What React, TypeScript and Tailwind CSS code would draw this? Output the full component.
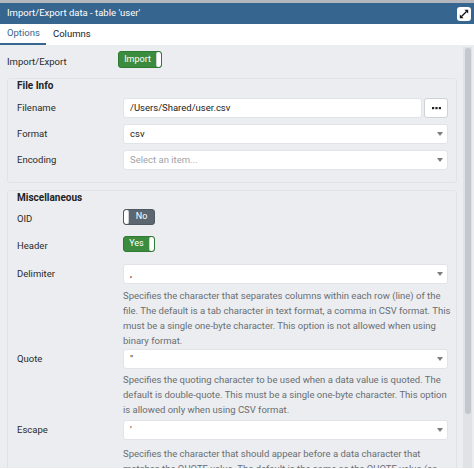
import React from "react";

const font = { fontFamily: "Roboto, 'Noto Sans', sans-serif" };

function Caret() {
  return (
    <svg width="6" height="4" viewBox="0 0 6 4" className="shrink-0">
      <polygon points="0,0 6,0 3,4" fill="#7a7d82" />
    </svg>
  );
}

function SelectBox({ value, placeholder }: { value?: string; placeholder?: string }) {
  return (
    <div className="flex-1 h-[20px] bg-white border border-[#e1e3e8] rounded-[3px] flex items-center justify-between pl-[6px] pr-[4px]">
      {value !== undefined ? (
        <span className="text-[#222]">{value}</span>
      ) : (
        <span className="text-[#a0a3a8]">{placeholder}</span>
      )}
      <Caret />
    </div>
  );
}

function Toggle({
  on,
  label,
  width,
  height,
}: {
  on: boolean;
  label: string;
  width: string;
  height: string;
}) {
  return (
    <div
      className={`${width} ${height} rounded-[3px] flex overflow-hidden border ${
        on ? "border-[#2f7a33] bg-[#3c8c3f]" : "border-[#4f5962] bg-[#5c6670]"
      }`}
    >
      {!on && <div className="w-[5px] bg-white rounded-[2px] border-r border-[#cfd3d8]" />}
      <div className="flex-1 flex items-center justify-center text-white text-[9px]">{label}</div>
      {on && <div className="w-[5px] bg-white rounded-[2px] border-l border-[#cfd3d8]" />}
    </div>
  );
}

function Help({ lines, className }: { lines: string[]; className: string }) {
  return (
    <div className={`pl-[106px] text-[#6a6d72] leading-[15px] whitespace-nowrap ${className}`}>
      {lines.map((l, i) => (
        <div key={i}>{l}</div>
      ))}
    </div>
  );
}

export default function App() {
  return (
    <div
      className="w-[474px] h-[469px] overflow-hidden flex flex-col bg-[#ebedf0] text-[9.5px] text-[#2a2a2a]"
      style={font}
    >
      <div className="h-[3px] bg-[#b4b8be]" />
      <div className="h-[21px] bg-[#36668f] flex items-center justify-between pl-[7px] pr-[3px]">
        <span className="text-white text-[9.5px]">Import/Export data - table 'user'</span>
        <div className="w-[14px] h-[14px] bg-white rounded-[3px] flex items-center justify-center">
          <svg width="10" height="10" viewBox="0 0 12 12">
            <line x1="3" y1="9" x2="9" y2="3" stroke="#111" strokeWidth="1.4" />
            <polygon points="1,11 1,6.5 5.5,11" fill="#111" />
            <polygon points="11,1 6.5,1 11,5.5" fill="#111" />
          </svg>
        </div>
      </div>
      <div className="h-[21px] bg-white flex items-stretch">
        <div className="w-[46px] pl-[7px] flex items-center border-b-2 border-[#36668f] text-[#36668f] text-[9.5px]">
          Options
        </div>
        <div className="pl-[7px] flex items-center text-[#222] text-[9.5px]">Columns</div>
      </div>
      <div className="flex-1 flex overflow-hidden">
        <div className="w-[457px] pl-[7px] overflow-hidden">
          <div className="flex items-start pt-[6px]">
            <div className="w-[111px] pt-[4px] leading-[14px]">Import/Export</div>
            <Toggle on={true} label="Import" width="w-[44px]" height="h-[17px]" />
          </div>

          <div className="mt-[9px] border border-[#dfe2e7] rounded-[3px] pl-[9px] pr-[8px] pb-[12px]">
            <div className="h-[13px] leading-[13px] font-bold text-[#222] text-[10px]">File Info</div>
            <div className="mt-[6px] flex flex-col gap-[6px]">
              <div className="flex items-center h-[20px]">
                <div className="w-[106px]">Filename</div>
                <div className="flex-1 flex gap-[2px] h-[20px]">
                  <div className="flex-1 bg-white border border-[#e1e3e8] rounded-[3px] flex items-center pl-[6px] text-[#222]">
                    /Users/Shared/user.csv
                  </div>
                  <div className="w-[24px] bg-white border border-[#cfd2d7] rounded-[3px] flex items-center justify-center">
                    <svg width="9" height="3" viewBox="0 0 9 3">
                      <rect x="0" y="0" width="2.2" height="2.2" fill="#222" />
                      <rect x="3.4" y="0" width="2.2" height="2.2" fill="#222" />
                      <rect x="6.8" y="0" width="2.2" height="2.2" fill="#222" />
                    </svg>
                  </div>
                </div>
              </div>
              <div className="flex items-center h-[20px]">
                <div className="w-[106px]">Format</div>
                <SelectBox value="csv" />
              </div>
              <div className="flex items-center h-[20px]">
                <div className="w-[106px]">Encoding</div>
                <SelectBox placeholder="Select an item..." />
              </div>
            </div>
          </div>

          <div className="mt-[7px] border border-[#dfe2e7] rounded-[3px] pl-[9px] pr-[8px] pb-[12px]">
            <div className="h-[13px] leading-[13px] font-bold text-[#222] text-[10px]">Miscellaneous</div>
            <div className="mt-[5px] flex items-start">
              <div className="w-[106px] pt-[3px] leading-[14px]">OID</div>
              <Toggle on={false} label="No" width="w-[32px]" height="h-[16px]" />
            </div>
            <div className="mt-[10px] flex items-start">
              <div className="w-[106px] pt-[3px] leading-[14px]">Header</div>
              <Toggle on={true} label="Yes" width="w-[32px]" height="h-[16px]" />
            </div>
            <div className="mt-[11px] flex items-center h-[20px]">
              <div className="w-[106px]">Delimiter</div>
              <SelectBox value="," />
            </div>
            <Help
              className="mt-[4px]"
              lines={[
                "Specifies the character that separates columns within each row (line) of the",
                "file. The default is a tab character in text format, a comma in CSV format. This",
                "must be a single one-byte character. This option is not allowed when using",
                "binary format.",
              ]}
            />
            <div className="mt-[1px] flex items-center h-[20px]">
              <div className="w-[106px]">Quote</div>
              <SelectBox value={'"'} />
            </div>
            <Help
              className="mt-[3px]"
              lines={[
                "Specifies the quoting character to be used when a data value is quoted. The",
                "default is double-quote. This must be a single one-byte character. This option",
                "is allowed only when using CSV format.",
              ]}
            />
            <div className="mt-[3px] flex items-center h-[20px]">
              <div className="w-[106px]">Escape</div>
              <SelectBox value={"'"} />
            </div>
            <Help
              className="mt-[6px]"
              lines={[
                "Specifies the character that should appear before a data character that",
                "matches the QUOTE value. The default is the same as the QUOTE value (so",
                "that the quoting character is doubled if it appears in the data).",
              ]}
            />
          </div>
        </div>
        <div className="w-[17px] flex pl-[6px] pt-[2px]">
          <div className="w-[9px] bg-[#e0e2e6] flex justify-center pt-[1px]">
            <div className="w-[6px] h-[366px] bg-[#c3c7ce] rounded-[3px]" />
          </div>
        </div>
      </div>
      <div className="h-[1px] bg-white" />
    </div>
  );
}
